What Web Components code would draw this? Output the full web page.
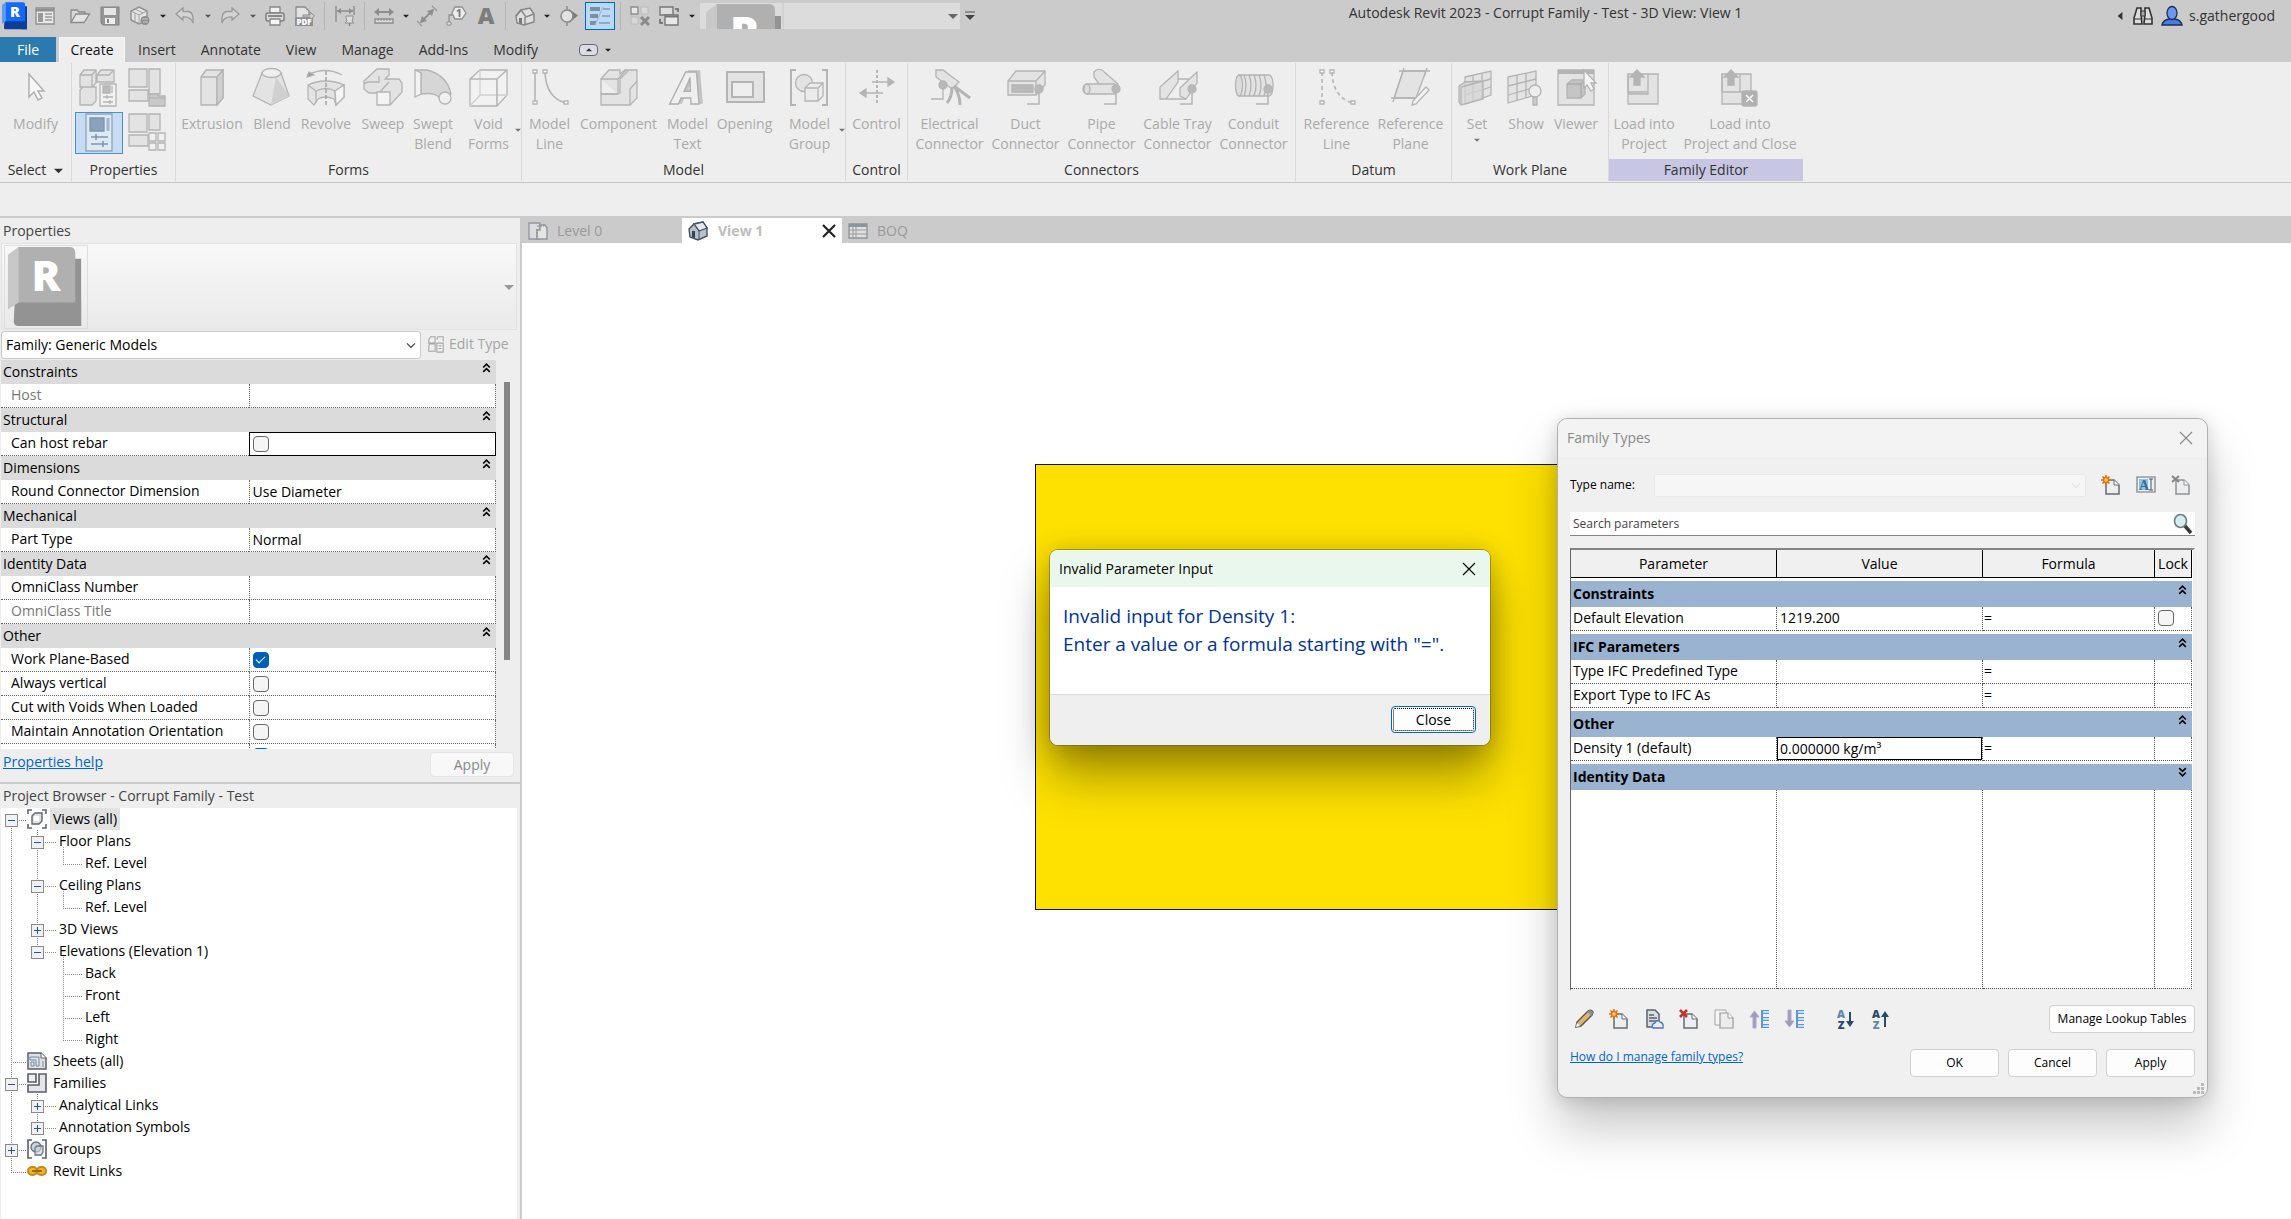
<!DOCTYPE html>
<html lang="en">
<head>
<meta charset="utf-8">
<title>Autodesk Revit 2023 - Corrupt Family - Test - 3D View: View 1</title>
<style>
  html, body { height: 100%; }
  body {
    margin: 0; display: flex; flex-direction: column; overflow: hidden;
    background: #eee; color: #333;
    font: 14px/20px "Open Sans", "Noto Sans", sans-serif;
  }
  main { flex: 1; display: flex; min-height: 0; border-top: 2px solid #cbcbcb; }
  aside { width: 520px; flex: none; display: flex; flex-direction: column; border-right: 2px solid #cbcbcb; }
  rv-browser { flex: 1; }
  rv-view { flex: 1; min-width: 0; }
</style>
</head>
<body>
<rv-titlebar></rv-titlebar>
<rv-menu></rv-menu>
<rv-ribbon>
  <rv-group name="Select" arrow style="--w:71px"><rv-tool icon="cursor" style="--w:71px">Modify</rv-tool></rv-group>
  <rv-group name="Properties" style="--w:103px"><rv-propgrid></rv-propgrid></rv-group>
  <rv-group name="Forms" style="--w:345px">
    <rv-tool icon="extrusion" style="--w:72px">Extrusion</rv-tool>
    <rv-tool icon="blend" style="--w:48px">Blend</rv-tool>
    <rv-tool icon="revolve" style="--w:60px">Revolve</rv-tool>
    <rv-tool icon="sweep" style="--w:54px">Sweep</rv-tool>
    <rv-tool icon="sweptblend" style="--w:46px">Swept<br>Blend</rv-tool>
    <rv-tool icon="voidforms" more style="--w:65px">Void<br>Forms</rv-tool>
  </rv-group>
  <rv-group name="Model" style="--w:323px">
    <rv-tool icon="modelline" style="--w:54px">Model<br>Line</rv-tool>
    <rv-tool icon="component" style="--w:84px">Component</rv-tool>
    <rv-tool icon="modeltext" style="--w:54px">Model<br>Text</rv-tool>
    <rv-tool icon="opening" style="--w:60px">Opening</rv-tool>
    <rv-tool icon="modelgroup" more style="--w:70px">Model<br>Group</rv-tool>
  </rv-group>
  <rv-group name="Control" style="--w:61px"><rv-tool icon="control" style="--w:60px">Control</rv-tool></rv-group>
  <rv-group name="Connectors" style="--w:387px">
    <rv-tool icon="electrical" style="--w:76px">Electrical<br>Connector</rv-tool>
    <rv-tool icon="duct" style="--w:76px">Duct<br>Connector</rv-tool>
    <rv-tool icon="pipe" style="--w:76px">Pipe<br>Connector</rv-tool>
    <rv-tool icon="cabletray" style="--w:76px">Cable Tray<br>Connector</rv-tool>
    <rv-tool icon="conduit" style="--w:76px">Conduit<br>Connector</rv-tool>
  </rv-group>
  <rv-group name="Datum" style="--w:155px">
    <rv-tool icon="refline" style="--w:74px">Reference<br>Line</rv-tool>
    <rv-tool icon="refplane" style="--w:74px">Reference<br>Plane</rv-tool>
  </rv-group>
  <rv-group name="Work Plane" start style="--w:156px">
    <rv-tool icon="wpset" below style="--w:50px">Set</rv-tool>
    <rv-tool icon="wpshow" style="--w:48px">Show</rv-tool>
    <rv-tool icon="wpviewer" style="--w:52px">Viewer</rv-tool>
  </rv-group>
  <rv-group name="Family Editor" start tinted style="--w:194px">
    <rv-tool icon="load" style="--w:70px">Load into<br>Project</rv-tool>
    <rv-tool icon="loadclose" style="--w:122px">Load into<br>Project and Close</rv-tool>
  </rv-group>
</rv-ribbon>
<main>
  <aside><rv-properties></rv-properties><rv-browser></rv-browser></aside>
  <rv-view>
    <rv-family-types></rv-family-types>
    <rv-message heading="Invalid Parameter Input">Invalid input for Density 1:<br>Enter a value or a formula starting with "=".</rv-message>
  </rv-view>
</main>
<script>
const LOGO = (a, b, d, r) => `<path d="M10 56H78V82H14Q9 82 9 77Z" fill="${d}"/><path d="M70 13H78V82H60V40Z" fill="${d}"/><path d="M13 1H66Q72 1 72 7V58H13Z" fill="${b}"/><path d="M14 1V58L3 65V9Z" fill="${a}"/><text x="42" y="46" text-anchor="middle" font-family="Open Sans" font-weight="800" font-size="44" fill="${r}">R</text>`;
const PAGE = `<path d="M5 5H13L18 10V19H5Z" fill="#eceef1" stroke="#666c74" stroke-width="1.5"/><path d="M13 5V10H18" fill="#fff" stroke="#666c74"/>`;
const CONN = `<path d="M29 26V37H17" fill="none" stroke-width="1.5"/><circle cx="29" cy="22" r="4" fill="#b9b9b9"/>`;
const ICONS = {
  logo: [84, LOGO('#5b9bf8', '#1469f8', '#0b3f98', '#fff')],
  logogray: [84, LOGO('#c8c8c8', '#b0b0b0', '#939393', '#fff')],
  ui: [20, `<path d="M1 2H19V18H1Z" fill="#e9e9e9" stroke="#909090" stroke-width="1.4"/><path d="M1 4H19" stroke="#909090" stroke-width="3"/><path d="M3 7H8V16H3Z" fill="#999"/><path d="M10 8H17M10 11H17M10 14H17" stroke="#999" stroke-width="1.4"/>`],
  open: [20, `<path d="M1 16V4H7L9 6H15V8" fill="#d8d8d8" stroke="#8a8a8a" stroke-width="1.3"/><path d="M1 16.5 6 8H19.5L14 16.5Z" fill="#e4e4e4" stroke="#8a8a8a" stroke-width="1.3"/>`],
  save: [20, `<path d="M1 1H19V19H3L1 17Z" fill="#969696" stroke="#808080"/><path d="M4 2H16V9H4Z" fill="#e6e6e6"/><path d="M5 12H15V18H5Z" fill="#eee"/><path d="M7 13H9V17H7Z" fill="#888"/>`],
  sync: [20, `<path d="M9 1 17 5V14L9 18 1 14V5Z" fill="#e4e4e4" stroke="#929292" stroke-width="1.5"/><path d="M1 5 9 9 17 5M9 9V18M5 3 13 7M5 7V16" fill="none" stroke="#a0a0a0"/><circle cx="15" cy="14.5" r="4.5" fill="#8d8d8d"/><path d="M12 13H18M13 16H18" stroke="#ccc"/>`],
  undo: [20, `<path d="M1 8 8 2V5.5H13Q19 6 18 17Q16 10.5 8 11V14Z" fill="#d4d4d4" stroke="#9a9a9a" stroke-width="1.3"/>`],
  redo: [20, `<path d="M19 8 12 2V5.5H7Q1 6 2 17Q4 10.5 12 11V14Z" fill="#d4d4d4" stroke="#9a9a9a" stroke-width="1.3"/>`],
  print: [20, `<path d="M5 1H15V7H5Z" fill="#f0f0f0" stroke="#888" stroke-width="1.3"/><rect x="1" y="7" width="18" height="8" rx="2" fill="#dcdcdc" stroke="#7f7f7f" stroke-width="1.5"/><path d="M3 10H17" stroke="#888" stroke-width="2"/><path d="M5 13H15V19H5Z" fill="#f5f5f5" stroke="#888" stroke-width="1.3"/>`],
  pdf: [20, `<path d="M1 1H10L14 5V12H1Z" fill="#e2e2e2" stroke="#8b8b8b" stroke-width="1.3"/><path d="M8 9H15V6L19.5 10 15 14V11H8Z" fill="#d0d0d0" stroke="#8b8b8b"/><rect y="12" width="18" height="8" fill="#8f8f8f"/><text x="9" y="19" text-anchor="middle" font-family="Open Sans" font-weight="800" font-size="8" fill="#fff">PDF</text>`],
  dimpin: [20, `<path d="M1 0V16M19 0V9M2 5H18" stroke="#8d8d8d" stroke-width="1.4"/><path d="M2 5 6 2V8ZM18 5 14 2V8Z" fill="#8d8d8d"/><path d="M11 10H18V12L17 15 19 17H10L12 15 11 12Z" fill="#ddd" stroke="#8d8d8d"/><path d="M14.5 17V20" stroke="#888" stroke-width="1.5"/>`],
  measure: [20, `<path d="M2 6H18" stroke="#8d8d8d" stroke-width="2"/><path d="M0 6 5 2V10ZM20 6 15 2V10Z" fill="#8d8d8d"/><path d="M1 13H19V17H1Z" fill="#ddd" stroke="#8d8d8d" stroke-width="1.4"/><path d="M4 13V15M7 13V15M10 13V15M13 13V15M16 13V15" stroke="#888"/>`],
  aligned: [20, `<path d="M4 16 16 4" stroke="#8d8d8d" stroke-width="1.8"/><path d="M3 17 5 10 10 15ZM17 3 15 10 10 5Z" fill="#8d8d8d"/><path d="M0 15 5 20M15 0 20 5" stroke="#999" stroke-width="1.3"/>`],
  tag: [20, `<path d="M3 17V9H7" fill="none" stroke="#8f8f8f" stroke-width="1.3"/><path d="M1 16H5V19H1Z" fill="#ddd" stroke="#8f8f8f"/><path d="M9 1H16L20 7 16 13H9L6 7Z" fill="#ececec" stroke="#8f8f8f" stroke-width="1.3"/><text x="13" y="11" text-anchor="middle" font-family="Open Sans" font-weight="700" font-size="11" fill="#777">1</text>`],
  texta: [20, `<text x="10" y="18" text-anchor="middle" font-family="Open Sans" font-weight="800" font-size="23" fill="#7d7d7d">A</text>`],
  home: [20, `<path d="M1 10 6 4 15 2 19 8V16L9 19 2 17Z" fill="#dedede" stroke="#858585" stroke-width="1.4"/><path d="M1 10 6 4 11 11 19 8M10 11V19" fill="none" stroke="#858585" stroke-width="1.4"/><path d="M4 12H7V18L4 17Z" fill="#777"/>`],
  section: [20, `<path d="M8 0V4M8 16V20" stroke="#8a8a8a" stroke-width="1.4"/><path d="M10 3 19 9.5 10 17Z" fill="#7c7c7c"/><circle cx="8" cy="10" r="6" fill="#e2e2e2" stroke="#8a8a8a" stroke-width="1.5"/>`],
  thin: [20, `<path d="M0 3H10M0 10H8M0 17H6" stroke="#7a8fa5" stroke-width="4"/><path d="M13 3H20M12 10H20M9 17H20" stroke="#8499ae" stroke-width="1.5"/><path d="M13 1 5 19" stroke="#9cb3c8"/>`],
  closehid: [20, `<path d="M1 1H8V8H1Z" fill="#e8e8e8" stroke="#8d8d8d" stroke-width="1.4"/><path d="M11 1H18V8H11ZM1 11H8V18H1Z" fill="#d8d8d8" stroke="#bababa"/><path d="M11 11 19 19M19 11 11 19" stroke="#8a8a8a" stroke-width="3"/>`],
  switchw: [20, `<path d="M1 1H14V9H1Z" fill="#ddd" stroke="#777" stroke-width="1.4"/><path d="M6 9H19V19H6Z" fill="#e8e8e8" stroke="#777" stroke-width="1.4"/><path d="M6 10.5H19" stroke="#777" stroke-width="2"/><path d="M16 3H19V6M4 17H1V13" fill="none" stroke="#666" stroke-width="1.5"/>`],
  binoc: [20, `<path d="M4 2H8V8L9 18H1V12ZM12 2H16L19 12V18H11L12 8Z" fill="#ddd" stroke="#333" stroke-width="1.6"/><path d="M8 5H12V10H8Z" fill="#aaa" stroke="#333"/><path d="M1 13H9M11 13H19" stroke="#333"/>`],
  person: [20, `<path d="M0 19Q1 14 7 13L13 13Q19 14 20 19Z" fill="#4b7be0" stroke="#1c2f55" stroke-width="1.4"/><ellipse cx="10" cy="7" rx="5" ry="6.5" fill="#6b97f0" stroke="#1c2f55" stroke-width="1.3"/>`],
  cursor: [40, `<path d="M13 7V30L18 25 22 33 26 31 22 24H28Z" fill="#f8f8f8" stroke="#b0b0b0" stroke-width="1.5"/>`],
  proptypes: [40, `<path d="M1 7 5 2H17V15L13 19H1ZM18 7 22 2H35V14H18ZM1 22 4 19H17V33L13 37H1Z"/><path d="M1 7H13L17 2M13 7V19M18 7H30L34 3" fill="none"/><path d="M21 16H37V38H21Z" fill="#f2f2f2"/><path d="M24 18H31V25H24Z" fill="#bbb"/><path d="M33 18V25M24 29H34M24 34H34M28 27V31M31 32V36"/>`],
  famcat: [40, `<path d="M1 1H19V19H1ZM21 1H32V26H21ZM1 22H20V33H1Z"/><path d="M21 26H29L31 28H37V38H21Z" fill="#c9c9c9"/><path d="M21 30H37"/>`],
  props: [40, `<path d="M7 1H33V38H7Z" fill="#dfe9f3" stroke="#8ea5bc"/><path d="M11 5H25V18H11Z" fill="#8aa2ba" stroke="#7d94ac"/><path d="M29 5V18" stroke="#a3b7ca" stroke-width="3"/><path d="M12 24H29M12 31H29M17 21V27M24 28V34" stroke="#7f97b0" stroke-width="1.6"/>`],
  famtypes: [40, `<path d="M1 1H19V19H1ZM21 1H32V17H21ZM1 22H20V33H1Z"/><path d="M21 20H28V28H21ZM30 20H37V28H30ZM21 30H28V37H21ZM30 30H37V37H30Z" fill="#f0f0f0"/>`],
  extrusion: [40, `<path d="M9 10 14 3H31V31L25 38H9Z"/><path d="M9 10H25V38M25 10 31 3" fill="none"/><path d="M25 10 31 3V31L25 38Z" fill="#cfcfcf"/>`],
  blend: [40, `<path d="M10 6 1 29 19 38 37 29 29 6Z"/><path d="M24 10 37 29 19 38Z" fill="#d0d0d0" stroke="none"/><ellipse cx="19.5" cy="6" rx="9.5" ry="4.5" fill="#efefef"/>`],
  revolve: [40, `<path d="M2 8Q19-1 36 8" fill="none"/><path d="M1 10 3 5 8 8Z" fill="#999"/><path d="M2 18Q10 14 19 14 30 14 38 18L38 30 30 38 28 32Q19 28 12 32L8 38 2 32Z"/><path d="M2 18 10 24Q20 19 29 24L38 18M10 24V36M29 24 30 38" fill="none"/><path d="M29 24 38 18V30L30 38Z" fill="#f5f5f5"/><path d="M20 4V39" stroke="#999" stroke-dasharray="4 2"/>`],
  sweep: [40, `<path d="M1 14 14 2H26V8L22 12H36L39 16V25L28 37H16V26H6L1 22Z"/><path d="M1 17Q3 15 6 15H16V9M16 26 26 15" fill="none"/><path d="M14 25H27V38H14Z" fill="#f4f4f4"/>`],
  sweptblend: [40, `<path d="M2 3H14Q34 8 38 27L27 31Q22 25 8 27V6Z" fill="#d6d6d6"/><path d="M2 3 8 6V27L2 30Z" fill="#f2f2f2"/><circle cx="32" cy="31" r="6" fill="#f0f0f0"/>`],
  voidforms: [40, `<path d="M1 12 11 3H38V28L28 39H1Z" fill="#f2f2f2"/><path d="M11 3V28H38M1 39 11 28" fill="none" stroke="#d0d0d0"/><path d="M1 12H28V39M28 12 38 3" fill="none" stroke-width="1.6"/>`],
  modelline: [40, `<path d="M5 5V36M15 5Q16 31 36 36" fill="none" stroke-width="1.6"/><path d="M3 3H7V6H3ZM3 34H7V37H3ZM13 3H17V6H13ZM34 34H38V37H34Z" fill="#fff"/>`],
  component: [40, `<path d="M2 12 10 3H21V7L26 3H38V31L31 38H2V27H19"/><path d="M2 27V12H19L27 3M19 12V27H2M21 27V12L29 4M31 38V22L38 14" fill="none"/>`],
  modeltext: [40, `<text x="19" y="37" text-anchor="middle" font-family="Open Sans" font-style="italic" font-weight="800" font-size="44" fill="#efefef" stroke="#b0b0b0" stroke-width="1.4" style="filter:drop-shadow(3px -1px 0 #c4c4c4)">A</text>`],
  opening: [40, `<path d="M2 5H39V35H2ZM7 15V30H28V15Z" fill-rule="evenodd" stroke-width="2"/>`],
  modelgroup: [40, `<path d="M6 3H1V38H6M32 3H37V38H32" fill="none" stroke-width="2"/><circle cx="14" cy="16" r="8.5"/><path d="M15 21 20 16H33V29L28 34H15Z" fill="#ececec"/><path d="M15 21H28L33 16M28 21V34" fill="none"/>`],
  control: [40, `<path d="M20 3V38" stroke-dasharray="3 2" stroke="#999"/><path d="M15 15H33M7 26H26" stroke-width="1.6"/><path d="M31 11 37 15 31 19ZM9 22 3 26 9 30Z" fill="#b4b4b4"/>`],
  electrical: [40, `<path d="M6 3H13L29 15 22 22 6 10Z"/><path d="M24 19 40 31M24 19Q30 28 30 38M22 20Q22 30 17 36" fill="none" stroke-width="3"/><path d="M1 32H13V20" fill="none"/><circle cx="13" cy="18" r="4" fill="#b9b9b9"/>`],
  duct: [40, `<path d="M2 14 10 4H39V18L30 28H2Z"/><path d="M2 14H30V28M30 14 39 4" fill="none"/><path d="M6 18H27V25H6Z" fill="#bbb"/><path d="M10 21H25"/><g transform="translate(4)">${CONN}</g>`],
  pipe: [40, `<path d="M12 5Q15 1 20 3L36 17 34 24H22L12 10Z"/><path d="M5 17H33V27H5Q1 26 1 22 1 18 5 17Z"/><ellipse cx="5" cy="22" rx="3" ry="5" fill="#ddd"/><g transform="translate(5)">${CONN}</g>`],
  cabletray: [40, `<path d="M2 20 20 4V15L8 32H2Z"/><path d="M22 21 39 5V16L28 32 22 29Z"/><path d="M20 12H31M8 32H28" fill="none"/><g transform="translate(5)">${CONN}</g>`],
  conduit: [40, `<path d="M5 8H35Q39 9 39 18 39 28 35 29H5Z"/><ellipse cx="5" cy="18.5" rx="3.5" ry="10.5" fill="#ddd"/><path d="M10 8Q14 18 10 29M15 8Q19 18 15 29M20 8Q24 18 20 29M25 8Q29 18 25 29M30 8Q34 18 30 29" fill="none"/><g transform="translate(5)">${CONN}</g>`],
  refline: [40, `<path d="M5 5V36M15 5Q16 31 36 36" fill="none" stroke-width="1.6" stroke-dasharray="4 3"/><path d="M3 3H7V6H3ZM3 34H7V37H3ZM13 3H17V6H13ZM34 34H38V37H34Z" fill="#fff"/>`],
  refplane: [40, `<path d="M12 4H35L25 31H3Z"/><path d="M8 4H39M0 31H28M13 1 2 35M36 1 33 10"/><path d="M22 34 35 20 38 23 25 37 21 38Z" fill="#f4f4f4"/>`],
  wpset: [40, `<path d="M8 10 34 4V28L8 37Z"/><path d="M16 8V34M25 6V31M8 19 34 12M8 28 34 20"/><path d="M2 19 8 15 26 14V32L4 38 2 35Z" fill="#d4d4d4" fill-opacity=".7"/><path d="M4 38V20L26 14" fill="none"/>`],
  wpshow: [40, `<path d="M2 10 30 4V28L2 36Z"/><path d="M11 8V34M20 6V31M2 19 30 12M2 28 30 20"/><circle cx="29" cy="24" r="6" fill="#eee"/><path d="M27 30H31V38H27Z" fill="#ccc"/>`],
  wpviewer: [40, `<path d="M2 3H38V38H2Z"/><path d="M2 5H38" stroke-width="4"/><path d="M11 17 16 13H29V27L25 31H11Z" fill="#c5c5c5"/><path d="M11 17H25V31M25 17 29 13" fill="none" stroke="#aaa"/><path d="M28 3V21L31 18 35 24 38 22 35 16H40Z" fill="#f4f4f4"/>`],
  load: [40, `<path d="M4 7H34V37H4Z"/><path d="M4 7V25H24V7M24 7V27H4" fill="none"/><path d="M10 18V10H6L13 3 20 10H16V18Z" fill="#b4b4b4"/>`],
  loadclose: [40, `<path d="M2 7H31V37H2Z"/><path d="M2 7V25H20V7M20 25H31" fill="none"/><path d="M8 18V10H4L11 3 18 10H14V18Z" fill="#b4b4b4"/><rect x="22" y="24" width="15" height="15" rx="2" fill="#b0b0b0"/><path d="M26 28 33 35M33 28 26 35" stroke="#fff" stroke-width="1.5"/>`],
  edittype: [20, `<path d="M2 5 4 2H9V9H2ZM11 5 12 2H18V7M2 12 3 10H9V18H2Z" fill="none" stroke="#a5a5a5" stroke-width="1.2"/><path d="M11 9H18V19H11Z" fill="#eee" stroke="#a5a5a5" stroke-width="1.2"/><path d="M13 12H16M13 15H16" stroke="#999"/>`],
  level: [20, `<path d="M1 2H12V18H1Z" fill="#dadcdf" stroke="#92979e" stroke-width="1.4"/><path d="M9 18V9H12V4H17L19 7V18Z" fill="#e4e4e4" stroke="#92979e" stroke-width="1.4"/><path d="M9 8V18M9 5H16" stroke="#888" stroke-dasharray="2 1"/>`],
  view3d: [20, `<path d="M1 8 6 3 15 1 19 7V15L10 19 2 16Z" fill="#b6c1cd" stroke="#47525f" stroke-width="1.4"/><path d="M6 3 15 1 19 7 11 10Z" fill="#e6e9ed" stroke="#47525f" stroke-width="1.3"/><path d="M4 10H7V17L4 16Z" fill="#39424e"/><path d="M11 10V18" stroke="#47525f"/>`],
  sched: [20, `<path d="M1 3H19V17H1Z" fill="#e0e0e0" stroke="#8f949b" stroke-width="1.4"/><path d="M1 4.5H19" stroke="#8f949b" stroke-width="3"/><path d="M1 9H19M1 13H19M5 6V17M8 6V17" stroke="#999"/>`],
  views: [20, `<path d="M1 5V1H5M15 1H19V5M19 15V19H15M5 19H1V15" fill="none" stroke="#62666c" stroke-width="1.6"/><path d="M5 7 8 4H15V12L12 15H5Z" fill="#dfe1e4" stroke="#62666c" stroke-width="1.4"/><path d="M7 7H12V12H7Z" fill="#fff"/>`],
  sheets: [20, `<path d="M1 2H14L19 7V18H1Z" fill="#dce1e8" stroke="#5b6067" stroke-width="1.5"/><path d="M14 2V7H19" fill="#fff" stroke="#5b6067"/><path d="M3 6H12V15H9V9H3ZM4 11H7V15H4Z" fill="none" stroke="#7989a0"/><path d="M16 10V16" stroke="#889"/>`],
  families: [20, `<path d="M1 1H9V9H1Z" fill="#eee" stroke="#595e66" stroke-width="1.6"/><path d="M12 1H19V19H1V12H12Z" fill="#e6e6ea" stroke="#595e66" stroke-width="1.6"/>`],
  groups: [20, `<path d="M5 1H1V19H5M15 1H19V19H15" fill="none" stroke="#5d6066" stroke-width="1.6"/><circle cx="9" cy="8" r="5" fill="#ccd4dd" stroke="#6b7580" stroke-width="1.4"/><path d="M8 9 10 7H16V13L14 16H8Z" fill="#ccd4dd" fill-opacity=".6" stroke="#6b7580" stroke-width="1.3"/>`],
  links: [20, `<rect x="1" y="6" width="9" height="8" rx="4" fill="#f0b429" stroke="#c58a12" stroke-width="2"/><rect x="10" y="6" width="9" height="8" rx="4" fill="#f0b429" stroke="#c58a12" stroke-width="2"/><path d="M5 10H15" stroke="#9c6a08" stroke-width="2"/>`],
  newtype: [20, PAGE + `<path d="M5 0V10M0 5H10M1.500 1.500 8.500 8.500M8.500 1.500 1.500 8.500" stroke="#e8720c" stroke-width="1.600"/><circle cx="5" cy="5" r="2.500" fill="#ffd27a" stroke="#e8720c" stroke-width="1.500"/>`],
  rename: [20, `<path d="M1 2H19V17H1Z" fill="#e6f1fa" stroke="#9a9a9a" stroke-width="1.6"/><path d="M3 4H12V15H3Z" fill="#8ec5ee"/><text x="8" y="15" text-anchor="middle" font-family="Liberation Serif" font-weight="700" font-size="14" fill="#44688c">A</text><path d="M13 4H17M15 4V15M13 15H17" stroke="#555"/>`],
  deltype: [20, `<g opacity=".7">${PAGE}</g><path d="M1 1 8 7M8 1 1 7" stroke="#888" stroke-width="2.2"/>`],
  search: [20, `<ellipse cx="7.5" cy="7" rx="6" ry="6.5" fill="#d6eef0" stroke="#6f7c80" stroke-width="1.6"/><path d="M12 12 18 19" stroke="#3a3a3a" stroke-width="3.5"/>`],
  pencil: [20, `<path d="M2 18 3 13 14 2Q17 0 19 3L18 6 7 17Z" fill="#e0b56a" stroke="#55585c" stroke-width="1.4"/><path d="M13 3 18 7 19 3 16 1Z" fill="#8b8f95"/><path d="M2 18 3 14 6 17Z" fill="#fff"/>`],
  cloudpage: [20, `<path d="M3 1H11L15 5V18H3Z" fill="#d9dde2" stroke="#5c636c" stroke-width="1.5"/><path d="M5 6H10M5 9H13M5 12H13" stroke="#5c636c" stroke-width="1.4"/><path d="M9 19Q7 15 11 14 13 10 16 13 20 14 19 19Z" fill="#e9f0fd" stroke="#4d74c2" stroke-width="1.3"/>`],
  delparam: [20, PAGE + `<path d="M1 1 8 8M8 1 1 8" stroke="#c9302c" stroke-width="2.6"/>`],
  dup: [20, `<path d="M1 1H12V16H1Z" fill="#f4f4f4" stroke="#a5a5a5"/><path d="M6 4H14L19 9V19H6Z" fill="#ececec" stroke="#9a9a9a" stroke-width="1.2"/><path d="M14 4V9H19" fill="#fff" stroke="#9a9a9a"/>`],
  moveup: [20, `<path d="M4 19V8H1L5.5 2 10 8H7V19Z" fill="#9aa0a8" stroke="#b6a2d8"/><path d="M12 1H20V5H14V8H20V12H14V15H20V19H12Z" fill="#5b96dc"/><path d="M14 3H20M14 10H20M14 17H20" stroke="#bfe0fa" stroke-width="2"/>`],
  movedown: [20, `<path d="M4 1V12H1L5.5 18 10 12H7V1Z" fill="#9aa0a8" stroke="#b6a2d8"/><path d="M12 1H20V5H14V8H20V12H14V15H20V19H12Z" fill="#5b96dc"/><path d="M14 3H20M14 10H20M14 17H20" stroke="#bfe0fa" stroke-width="2"/>`],
  sortaz: [20, `<text x="6" y="9" text-anchor="middle" font-family="Open Sans" font-weight="800" font-size="11" fill="#6487a8">A</text><text x="6" y="20" text-anchor="middle" font-family="Open Sans" font-weight="800" font-size="11" fill="#2b4a68">Z</text><path d="M15 3V14" stroke="#2b4a68" stroke-width="2"/><path d="M11 12H19L15 18Z" fill="#2b4a68"/>`],
  sortza: [20, `<text x="6" y="9" text-anchor="middle" font-family="Open Sans" font-weight="800" font-size="11" fill="#2b4a68">A</text><text x="6" y="20" text-anchor="middle" font-family="Open Sans" font-weight="800" font-size="11" fill="#6487a8">Z</text><path d="M15 6V18" stroke="#2b4a68" stroke-width="2"/><path d="M11 8H19L15 2Z" fill="#2b4a68"/>`],
  cross: [20, `<path d="M4 4 16 16M16 4 4 16" stroke="currentColor" stroke-width="1.2" fill="none"/>`],
  crossbold: [20, `<path d="M4 4 16 16M16 4 4 16" stroke="#222" stroke-width="2.2" fill="none"/>`],
  chevron: [20, `<path d="M5 8 10 13 15 8" stroke="currentColor" stroke-width="1.3" fill="none"/>`],
  tri: [10, `<path d="M0 3H10L5 8Z" fill="currentColor"/>`],
  trileft: [10, `<path d="M8 0V10L2 5Z" fill="#333"/>`],
  custom: [10, `<path d="M0 1H10" stroke="#555"/><path d="M0 4H10L5 9Z" fill="#444"/>`],
  up2: [10, `<path d="M2 5 5 2 8 5M2 9 5 6 8 9" stroke="#000" stroke-width="1.4" fill="none"/>`],
  down2: [10, `<path d="M2 1 5 4 8 1M2 5 5 8 8 5" stroke="#000" stroke-width="1.4" fill="none"/>`],
};
const icon = (n, w) => { const [s, b] = ICONS[n]; w = w || s;
  const attr = s === 40 ? 'fill="#e3e3e3" stroke="#b4b4b4" stroke-width="1.3"' : '';
  return `<svg width="${w}" height="${w}" viewBox="0 0 ${s} ${s}" ${attr} aria-hidden="true">${b}</svg>`; };

const BASE = `*,:host{box-sizing:border-box}svg{display:block;flex:none;overflow:visible}
button{font:inherit;color:inherit;background:none;border:0;padding:0;margin:0}
input,select{font:inherit;color:inherit;margin:0}
input[type=checkbox]{appearance:none;width:16px;height:16px;border:1px solid #666;border-radius:4px;background:#f5f5f5;display:grid;place-items:center}
input[type=checkbox]:checked{background:#005fb8;border-color:#005fb8}
input[type=checkbox]:checked::before{content:"";width:8px;height:4px;border:solid #fff;border-width:0 0 1px 1px;transform:rotate(-45deg);margin-bottom:3px}
.combo{display:grid;align-items:center}.combo>*{grid-area:1/1}.combo select{appearance:none;width:100%}.combo svg{justify-self:end;margin-right:2px;pointer-events:none}
a{color:#0066cc}`;
const define = (tag, html, css) => customElements.define(tag, class extends HTMLElement {
  constructor() {
    super();
    this.attachShadow({ mode: 'open' });
  }
  connectedCallback() {
    if (this.shadowRoot.childNodes.length) return;
    const t = document.createElement('template');
    t.innerHTML = `<style>${BASE}${css}</style>` + (typeof html === 'function' ? html(this) : html);
    this.shadowRoot.append(t.content.cloneNode(true));
  }
});

const QAT = ['logo', 'ui', '_', 'open', 'save', 'sync', 'v', 'undo', 'u', 'redo', 'u', 'print', 'pdf', '|', 'dimpin', '|', 'measure', 'v', 'aligned', 'tag', 'texta', '|', 'home', 'v', 'section', 'thin', '|', 'closehid', 'switchw', 'v'];
define('rv-titlebar', () => QAT.map(n =>
    n === '|' ? '<i class="sep"></i>' : n === '_' ? '<i class="gap"></i>'
    : n === 'v' || n === 'u' ? `<button class="dd ${n}" aria-label="More">${icon('tri', 6)}</button>`
    : `<button class="b ${n}" aria-label="${n}">${icon(n, n === 'logo' ? 28 : 20)}</button>`).join('')
  + `<div class="type"><span class="thumb">${icon('logogray', 84)}</span><button aria-label="Type list">${icon('tri', 10)}</button></div>
  <button class="cust" aria-label="Customize">${icon('custom', 10)}</button>
  <div class="title">Autodesk Revit 2023 - Corrupt Family - Test - 3D View: View 1</div>
  <div class="info">${icon('trileft', 8)}${icon('binoc', 20)}${icon('person', 20)}<span>s.gathergood</span></div>`,
`:host{display:flex;height:37px;background:#cbcbcb;padding-bottom:5px;align-items:center;color:#333}
.b{width:30px;height:28px;display:grid;place-items:center;flex:none}
.measure,.home,.closehid,.aligned{width:28px}
.thin{width:30px;margin:0 1px;background:#b9d9f7;border:1px solid #0067c8}
.dd{width:15px;display:grid;place-items:center;color:#222;flex:none}.u{color:#555}
.sep{width:1px;height:28px;margin:0 5px 0 4px;background:#b3b3b3;flex:none}.gap{width:5px;flex:none}
.type{width:260px;height:26px;background:#dcdcdc;display:flex;align-items:center;justify-content:space-between;padding-right:2px;margin-left:1px;color:#666;flex:none}
.thumb{width:84px;height:26px;overflow:hidden;border-right:2px solid #d2d2d2;padding-left:3px}
.cust{margin-left:5px;flex:none}
.title{margin:0 auto;padding-bottom:6px;white-space:nowrap}
.info{display:flex;align-items:center;gap:9px;padding-right:16px}.info span{margin-left:-2px}`);

define('rv-menu', `<nav><button class="file">File</button><button class="on">Create</button><button>Insert</button><button>Annotate</button><button>View</button><button>Manage</button><button>Add-Ins</button><button>Modify</button></nav>
<button class="pill" aria-label="Minimize ribbon">${icon('tri', 6)}</button><button class="dd" aria-label="Ribbon options">${icon('tri', 6)}</button>`,
`:host{display:flex;height:25px;background:#cbcbcb;align-items:center}
nav{display:flex;height:25px}nav button{padding:0 13px 0 12px}
nav .file{width:56px;background:#2a7ab0;color:#fff;margin-right:3px;padding:0}
nav .on{background:#eee;color:#111;width:66px;margin-right:1px;border:1px solid #f6f6f6;border-bottom:0;padding:0}
.pill{width:19px;height:12px;border:1px solid #667;border-radius:4px;background:#dcdce4;display:grid;place-items:center;margin:0 7px 0 28px}
.pill svg{transform:rotate(180deg)}.dd svg{color:#222}`);

define('rv-ribbon', `<div class="groups"><slot></slot></div><div class="opt"></div>`,
`:host{display:block;background:#eee}.groups{display:flex;height:121px;border-bottom:1px solid #c6c6c6;padding-top:1px}.opt{height:33px}`);
define('rv-group', el => `<div class="tools"><slot></slot></div><div class="cap">${el.getAttribute('name')}${el.hasAttribute('arrow') ? icon('tri', 9) : ''}</div>`,
`:host{display:flex;flex-direction:column;box-sizing:content-box;width:var(--w);border-right:1px solid #d9d9d9;height:118px;flex:none}
:host([tinted]){border:0}
:host([tinted]) .cap{background:#c7c6e3}
.tools{flex:1;display:flex;justify-content:center;padding-top:4px}
:host([start]) .tools{justify-content:flex-start}
.cap{height:22px;display:flex;justify-content:center;align-items:center;gap:8px;white-space:nowrap}`);
define('rv-tool', el => `<button disabled>${icon(el.getAttribute('icon'), 40)}<span class="l"><slot></slot></span>${el.hasAttribute('below') ? icon('tri', 6) : ''}</button>${el.hasAttribute('more') ? `<span class="m">${icon('tri', 6)}</span>` : ''}`,
`:host{display:block;width:var(--w);color:#aaa;position:relative}
button{width:100%;display:flex;flex-direction:column;align-items:center;white-space:nowrap}
.l{margin-top:7px;text-align:center}button>svg+.l+svg{color:#777;margin-top:3px}
.m{position:absolute;right:0;top:60px;color:#777}`);
define('rv-propgrid', ['proptypes', 'famcat', 'props', 'famtypes'].map(n => `<button class="${n}" aria-label="${n}">${icon(n, 40)}</button>`).join(''),
`:host{display:grid;grid-template-columns:48px 48px;grid-template-rows:42px 42px;column-gap:1px;row-gap:3px}
button{display:grid;place-items:center}.props{background:#c6dcf2;border:1px solid #4a8fd8}`);

const SECTIONS = [
  ['Constraints', ['Host', '', 'off']],
  ['Structural', ['Can host rebar', 0, 'focus']],
  ['Dimensions', ['Round Connector Dimension', 'Use Diameter']],
  ['Mechanical', ['Part Type', 'Normal']],
  ['Identity Data', ['OmniClass Number', ''], ['OmniClass Title', '', 'off']],
  ['Other', ['Work Plane-Based', 1], ['Always vertical', 0], ['Cut with Voids When Loaded', 0], ['Maintain Annotation Orientation', 0], ['', 1]],
];
let uid = 0;
define('rv-properties', () => `<h2>Properties</h2>
<div class="type"><span>${icon('logogray', 82)}</span><button aria-label="Change type">${icon('tri', 10)}</button></div>
<div class="sel"><div class="combo"><select aria-label="Category"><option>Family: Generic Models</option></select>${icon('chevron', 16)}</div><button class="edit" disabled>${icon('edittype', 18)}Edit Type</button></div>
<div class="scroll"><table>${SECTIONS.map(([h, ...rows]) => `<tbody><tr class="h"><th colspan="2"><div>${h}${icon('up2', 11)}</div></th></tr>${rows.map(([n, v, c = '']) => { const id = 'p' + uid++;
  return `<tr class="${c}"><td><label for="${id}">${n}</label></td><td>${typeof v === 'number' ? `<input type="checkbox" id="${id}"${v ? ' checked' : ''}${n ? '' : ' aria-label="Shared"'}>` : `<output id="${id}">${v}</output>`}</td></tr>`; }).join('')}</tbody>`).join('')}</table><i class="bar"></i></div>
<footer><a href="#">Properties help</a><button disabled>Apply</button></footer>`,
`:host{display:flex;flex-direction:column;border-bottom:2px solid #cbcbcb;height:566px;flex:none;padding:0 3px 0 1px}
h2{font-size:14px;font-weight:400;margin:0;line-height:25px;padding-left:2px;color:#444}
.type{height:87px;margin-bottom:1px;border:1px solid #e2e2e2;background:linear-gradient(#f8f8f8,#eaeaea);display:flex;justify-content:space-between;align-items:center;padding:0 2px;color:#999}
.type span{border:1px solid #ddd}
.sel{display:flex;gap:6px;height:29px}
.combo{width:420px;height:28px}.combo select{height:28px;border:1px solid #c9c9c9;border-radius:3px;background:#fff;color:#000;padding:0 4px}
.edit{display:flex;align-items:center;gap:4px;color:#a5a5a5;height:26px}
.scroll{height:389px;overflow:hidden;display:flex;justify-content:space-between;padding-right:7px}
table{border-collapse:separate;border-spacing:0;table-layout:fixed;width:495px;color:#000;background:#fff;align-self:flex-start}
td,th{padding:0;height:24px;text-align:left;font-weight:400;line-height:20px}
th{background:#dbdbdb}th div{display:flex;justify-content:space-between;height:24px;padding:2px 4px 0 2px}
td{border-bottom:1px dotted #666;padding:0 0 2px 10px}td+td{border-left:1px dotted #666;border-right:1px dotted #666;padding:0 3px 0 3px}
td output{display:block}
.off td{color:#777}.focus td+td{outline:1px solid #000;outline-offset:-1px}
.bar{width:6px;height:278px;margin-top:22px;background:#858585;flex:none}
footer{display:flex;justify-content:space-between;padding:3px 3px 0 2px}
footer button{width:84px;height:25px;background:#f8f8f8;border:1px solid #e4e4e4;border-radius:4px;color:#888}`);

const TREE = [
  [0, 'Views (all)', '-', 'views', '', 1], [1, 'Floor Plans', '-'], [2, 'Ref. Level', '', '', 'end'], [1, 'Ceiling Plans', '-'], [2, 'Ref. Level', '', '', 'end'],
  [1, '3D Views', '+'], [1, 'Elevations (Elevation 1)', '-', '', 'end'], [2, 'Back', '', '', 'nob'], [2, 'Front', '', '', 'nob'], [2, 'Left', '', '', 'nob'], [2, 'Right', '', '', 'end nob'],
  [0, 'Sheets (all)', '', 'sheets'], [0, 'Families', '-', 'families'], [1, 'Analytical Links', '+'], [1, 'Annotation Symbols', '+', '', 'end'], [0, 'Groups', '+', 'groups'], [0, 'Revit Links', '', 'links', 'end'],
];
define('rv-browser', () => `<h2>Project Browser - Corrupt Family - Test</h2><div role="tree">${TREE.map(([lv, t, box, ic, f = '', on], i) => {
  const X = [11, 37, 63][lv], W = [50, 56, 82][lv], end = f.includes('end');
  let d = `M${X}.5 ${i ? 0 : 12}V${end ? 11 : 22}`;
  if (lv > 0) d += 'M11.5 0V22';
  if (lv > 1 && !f.includes('nob')) d += 'M37.5 0V22';
  if (lv === 0 && box === '-') d += 'M37.5 12V22';
  if (lv === 1 && box === '-') d += 'M63.5 17V22';
  d += `M${X} 12.5H${lv ? W : 27}`;
  return `<div role="treeitem" class="r"><svg width="${W}" height="22"><path d="${d}" stroke="#8c8c8c" stroke-dasharray="1 1" fill="none"/>${box ? `<rect x="${X - 5.5}" y="6.5" width="12" height="12" fill="#f1f1f1" stroke="#8a8a8a"/><path d="M${X - 3} 12.5H${X + 4}${box === '+' ? `M${X}.5 9V16` : ''}" stroke="#2b4fa8"/>` : ''}${ic ? `<svg x="27" y="1" width="20" height="20" viewBox="0 0 20 20"><rect width="20" height="20" fill="#fff"/>${ICONS[ic][1]}</svg>` : ''}</svg><span class="l${lv}${on ? ' on' : ''}">${t}</span></div>`; }).join('')}</div>`,
`:host{display:flex;flex-direction:column;padding:0 3px 0 1px}
h2{font-size:14px;font-weight:400;margin:0;line-height:24px;padding-left:2px;color:#444}
[role=tree]{flex:1;background:#fff;color:#000}.r{display:flex;height:22px;margin-left:-1px}
.r span{padding:0 3px;line-height:22px}.on{background:#e2e2e2}`);

define('rv-view', `<nav><button class="t">${icon('level', 20)}Level 0</button><button class="t on">${icon('view3d', 20)}<b>View 1</b>${icon('crossbold', 20)}</button><button class="t">${icon('sched', 20)}BOQ</button></nav><div class="canvas"><div class="solid"></div><slot></slot></div>`,
`:host{display:flex;flex-direction:column}
nav{display:flex;height:25px;background:#cbcbcb}.t{width:160px;display:flex;align-items:center;gap:9px;padding:0 6px;color:#9a9a9a}
.on{background:#fff;color:#bdbdbd;padding:0 3px 0 6px;gap:10px}.on svg:last-child{margin-left:auto}
.canvas{flex:1;background:#fff;position:relative;overflow:hidden}
.solid{position:absolute;left:513px;top:221px;width:640px;height:446px;background:#fee100;border:1px solid #111}`);

const FT = [['Constraints', ['Default Elevation', '1219.200', 1]], ['IFC Parameters', ['Type IFC Predefined Type', ''], ['Export Type to IFC As', '']], ['Other', ['Density 1 (default)', '0.000000 kg/m³', 0, 1]], ['Identity Data']];
define('rv-family-types', () => `<header><h2>Family Types</h2><button aria-label="Close">${icon('cross', 20)}</button></header>
<div class="name"><label for="tn">Type name:</label><div class="combo"><select id="tn" disabled></select>${icon('chevron', 16)}</div><button aria-label="New type">${icon('newtype', 20)}</button><button aria-label="Rename">${icon('rename', 20)}</button><button aria-label="Delete type">${icon('deltype', 20)}</button></div>
<div class="search"><input aria-label="Search parameters" placeholder="Search parameters">${icon('search', 20)}</div>
<div class="grid"><table><colgroup><col class="p"><col class="v"><col class="f"><col class="k"></colgroup><thead><tr><th>Parameter</th><th>Value</th><th>Formula</th><th>Lock</th></tr></thead>
${FT.map(([h, ...rows], i) => `<tbody><tr class="h"><th colspan="4"><div>${h}${icon(i === 3 ? 'down2' : 'up2', 11)}</div></th></tr>${rows.map(([n, v, ck, ed]) => `<tr><td>${n}</td><td${ed ? ' class="ed"' : ''}>${ed ? `<input aria-label="${n}" value="${v}">` : v}</td><td>=</td><td>${ck ? '<input type="checkbox" aria-label="Lock Default Elevation">' : ''}</td></tr>`).join('')}</tbody>`).join('')}
<tbody><tr class="fill"><td></td><td></td><td></td><td></td></tr></tbody></table></div>
<div class="bar">${['pencil', 'newtype', 'cloudpage', 'delparam', 'dup', 'moveup', 'movedown', 'sortaz', 'sortza'].map(n => `<button class="${n}" aria-label="${n}">${icon(n, 20)}</button>`).join('')}<button class="btn wide">Manage Lookup Tables</button></div>
<footer><a href="#">How do I manage family types?</a><button class="btn">OK</button><button class="btn">Cancel</button><button class="btn">Apply</button></footer>
<svg class="grip" width="12" height="12" fill="#bbb"><path d="M8 0h3v3h-3zM8 4h3v3h-3zM4 4h3v3h-3zM0 8h3v3h-3zM4 8h3v3h-3zM8 8h3v3h-3z"/></svg>`,
`:host{position:absolute;left:1035px;top:175px;width:651px;height:680px;background:#f0f0f0;border:1px solid #b0b0b0;border-radius:10px;box-shadow:0 30px 50px rgba(0,0,0,.22),0 2px 18px rgba(0,0,0,.15);padding:0 12px;color:#000;font-size:13px}
header{display:flex;align-items:center;justify-content:space-between;height:38px;color:#8a8a8a;margin:0 -12px;padding:0 11px 0 9px;background:#f3f3f3;border-radius:10px 10px 0 0}
h2{font-size:14px;font-weight:400;margin:0}
.name{display:flex;align-items:center;height:24px;margin-top:16px}label{width:84px;font-size:12px}
.combo{width:432px;height:23px;color:#aaa}.combo select{height:23px;border:1px solid #e6e6e6;border-radius:2px;background:#f9f9f9}
.name button{width:20px;margin-left:15px}
.search{display:flex;background:#fff;border-bottom:1px solid #868686;height:24px;margin-top:15px;padding-right:2px;align-items:center}
.search input{flex:1;border:0;outline:0;background:none;padding:0 3px;font-size:12px}
.search input::placeholder{color:#444;font-weight:500;opacity:1}
.grid{border:solid;border-width:2px 2px 2px 1px;border-color:#858585 #eee #eee #666;background:#fff;margin-top:12px;height:443px;font-size:14px;padding-right:1px}
table{border-collapse:separate;border-spacing:0;table-layout:fixed;width:100%}
.p{width:206px}.v{width:206px}.f{width:172px}
td,th{padding:0;line-height:20px}thead th{font-weight:400;background:#f0f0f0;height:28px;border-right:1px solid #000;border-bottom:1px solid #000}
.h th{padding-top:3px;text-align:left;height:29px}.h div{background:#9ab3d0;height:26px;display:flex;justify-content:space-between;font-weight:700;padding:3px 4px 0 2px;line-height:20px}
td{height:24px;border-bottom:1px dotted #555;border-right:1px dotted #555;padding:0 2px 1px}
td+td{padding-left:3px}td:nth-child(3){padding-left:1px}
.ed{padding:0!important}.ed input{width:100%;height:23px;border:1px solid #000;padding:0 2px;outline:0;display:block;background:#fff}
.fill td{height:199px}
.bar{display:flex;align-items:center;margin-top:13px;height:30px;gap:15px;padding-left:4px}.bar .sortaz{margin-left:16px}
.bar .wide{width:146px;margin-left:auto}
.btn{width:89px;height:28px;font-size:12px;background:#fdfdfd;border:1px solid #d0d0d0;border-radius:4px;white-space:nowrap}
footer{display:flex;gap:9px;margin-top:15px;font-size:12px}footer a{margin-right:auto;line-height:16px}
.grip{position:absolute;right:2px;bottom:2px}`);

define('rv-message', el => `<header><h2>${el.getAttribute('heading')}</h2><button aria-label="Close">${icon('cross', 20)}</button></header><p><slot></slot></p><footer><button>Close</button></footer>`,
`:host{position:absolute;left:528px;top:307px;width:440px;height:195px;display:flex;flex-direction:column;background:#fff;border-radius:8px;overflow:hidden;box-shadow:0 0 0 1px rgba(90,90,60,.5),0 32px 48px rgba(0,0,0,.34),0 4px 28px rgba(0,0,0,.24);color:#000}
header{height:37px;background:#e9f7ed;display:flex;justify-content:space-between;align-items:center;padding:0 11px 0 9px}
h2{font-size:14px;font-weight:400;margin:0}
p{margin:0;flex:1;padding:15px 13px;font-size:19px;line-height:28px;color:#039;white-space:nowrap}
footer{height:51px;background:#efefef;border-top:1px solid #dcdcdc;display:flex;justify-content:flex-end;padding:11px 14px}
footer button{width:85px;height:27px;border:1px solid #0067c0;border-radius:4px;background:#fdfdfd;outline:1px dotted #000;outline-offset:-3px}`);
</script>
</body>
</html>
